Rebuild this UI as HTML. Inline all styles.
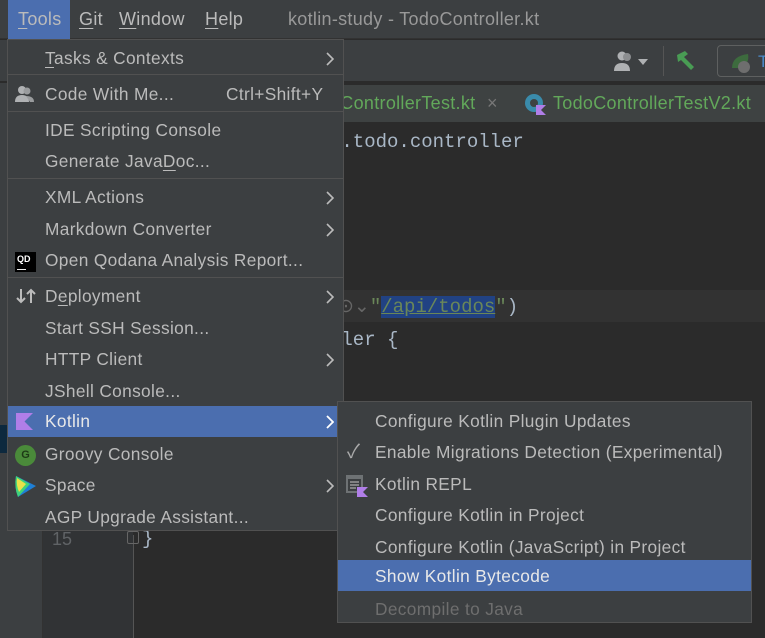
<!DOCTYPE html>
<html><head><meta charset="utf-8"><style>
*{margin:0;padding:0;box-sizing:border-box}
body{width:765px;height:638px;overflow:hidden;background:#2b2b2b;position:relative;font-family:"Liberation Sans","Noto Sans CJK KR",sans-serif;color:#bbbbbb}
.a{position:absolute}
.mb{font-size:18px;color:#bbb;letter-spacing:0.3px}
.u{text-decoration:underline;text-underline-offset:3px}
.menu{position:absolute;background:#3c3f41;border:1px solid #515151}
.it{position:absolute;left:0;right:0;height:31px;font-size:17.3px;letter-spacing:0.35px;line-height:31px;padding-left:37px;white-space:nowrap}
.sel{background:#4b6eaf;color:#e8e8e8}
.arr{position:absolute;right:9px;top:9px;width:8px;height:14px}
.sep{position:absolute;left:0;right:0;height:1px;background:#515151}
.code{font-family:"Liberation Mono",monospace;font-size:19px;color:#a9b7c6}
</style></head><body>
<div class="a" style="left:0;top:0;width:765px;height:39px;background:#3c3f41;border-bottom:1px solid #323232"></div>
<div class="a" style="left:8px;top:0;width:62px;height:39px;background:#4b6eaf"></div>
<div class="a mb" style="left:18px;top:9px"><span class="u">T</span>ools</div>
<div class="a mb" style="left:79px;top:9px"><span class="u">G</span>it</div>
<div class="a mb" style="left:119px;top:9px"><span class="u">W</span>indow</div>
<div class="a mb" style="left:205px;top:9px"><span class="u">H</span>elp</div>
<div class="a mb" style="left:288px;top:9px;color:#999">kotlin-study - TodoController.kt</div>
<div class="a" style="left:0;top:40px;width:765px;height:43px;background:#3c3f41;border-bottom:2px solid #2b2b2b"></div>
<svg class="a" style="left:612px;top:50px" width="40" height="24"><circle cx="10" cy="6" r="4.5" fill="#afb1b3"/><path d="M2 21 q0-8 8-8 q8 0 8 8z" fill="#afb1b3"/><circle cx="15" cy="7" r="4" fill="#8c8e90"/><path d="M26 9h10l-5 6z" fill="#afb1b3"/></svg>
<div class="a" style="left:663px;top:46px;width:1px;height:30px;background:#555"></div>
<svg class="a" style="left:674px;top:50px" width="26" height="24"><path d="M3 5 l8-4 l3 3 l-4 3 l10 10 l-3 3 l-10 -10 l-3 2z" fill="#499c54"/></svg>
<div class="a" style="left:717px;top:45px;width:60px;height:32px;border:1px solid #5e6060;border-radius:4px"></div>
<svg class="a" style="left:728px;top:52px" width="30" height="22"><path d="M4 16 q0-12 16-14 q2 10-8 14z" fill="#3d6b3e"/><circle cx="16" cy="15" r="6" fill="#6e6e6e"/></svg>
<div class="a" style="left:758px;top:52px;font-size:17px;color:#4a88c7">T</div>
<div class="a" style="left:43px;top:85px;width:722px;height:37px;background:#3e4242"></div>
<div class="a" style="left:330px;top:93px;font-size:18px;color:#62a85a;letter-spacing:0.3px">oControllerTest.kt</div>
<div class="a" style="left:487px;top:93px;font-size:18px;color:#777">×</div>
<svg class="a" style="left:524px;top:92px" width="24" height="24"><circle cx="10" cy="11" r="9" fill="#3a8bab"/><circle cx="10" cy="11" r="4" fill="#3e4242"/><path d="M12 13h10l-5 5 5 5h-10z" fill="#b07ee8"/></svg>
<div class="a" style="left:553px;top:93px;font-size:18px;color:#62a85a;letter-spacing:0.3px">TodoControllerTestV2.kt</div>
<div class="a" style="left:0;top:83px;width:43px;height:555px;background:#3c3f41;border-right:1px solid #323232"></div>
<div class="a" style="left:0;top:425px;width:8px;height:28px;background:#0d293e"></div>
<div class="a" style="left:43px;top:122px;width:90px;height:516px;background:#313335"></div>
<div class="a" style="left:133px;top:535px;width:1px;height:103px;background:#555"></div>
<div class="a" style="left:127px;top:531px;width:12px;height:13px;border:1px solid #666;border-radius:2px"></div>
<div class="a" style="left:52px;top:529px;font-size:18px;color:#606366">15</div>
<div class="a code" style="left:142px;top:528px">}</div>
<div class="a code" style="left:330px;top:131px">r.todo.controller</div>
<div class="a" style="left:134px;top:290px;width:631px;height:32px;background:#323232"></div>
<div class="a code" style="left:338px;top:295px"><span style="color:#666">⊙⌄</span><span style="color:#6a8759">"</span><span style="background:#214283;color:#6a8759;text-decoration:underline">/api/todos</span><span style="color:#6a8759">"</span>)</div>
<div class="a code" style="left:330px;top:329px">ller {</div>
<div class="menu" style="left:7px;top:39px;width:337px;height:492px">
<div class="it" style="top:3px"><span class="u">T</span>asks &amp; Contexts<svg class="arr"><path d="M1 1l6 6-6 6" stroke="#bbb" stroke-width="1.6" fill="none"/></svg></div>
<div class="sep" style="top:34px"></div>
<div class="it" style="top:39px">Code With Me...<span class="a" style="left:218px">Ctrl+Shift+Y</span>
<svg class="a" style="left:6px;top:6px" width="22" height="18"><circle cx="8" cy="5" r="4" fill="#afb1b3"/><path d="M1 17q0-7 7-7q7 0 7 7z" fill="#afb1b3"/><circle cx="13" cy="6" r="3.5" fill="#9a9c9e"/><path d="M12 11q8 0 8 6h-4z" fill="#9a9c9e"/></svg></div>
<div class="sep" style="top:71px"></div>
<div class="it" style="top:75px">IDE Scripting Console</div>
<div class="it" style="top:106px">Generate Java<span class="u">D</span>oc...</div>
<div class="sep" style="top:138px"></div>
<div class="it" style="top:142px">XML Actions<svg class="arr"><path d="M1 1l6 6-6 6" stroke="#bbb" stroke-width="1.6" fill="none"/></svg></div>
<div class="it" style="top:174px">Markdown Converter<svg class="arr"><path d="M1 1l6 6-6 6" stroke="#bbb" stroke-width="1.6" fill="none"/></svg></div>
<div class="it" style="top:205px">Open Qodana Analysis Report...
<div class="a" style="left:7px;top:7px;width:21px;height:20px;background:#000;color:#fff;font-size:9px;line-height:10px;font-weight:bold;padding:2px;letter-spacing:0">QD<br>—</div></div>
<div class="sep" style="top:237px"></div>
<div class="it" style="top:241px">D<span class="u">e</span>ployment<svg class="arr"><path d="M1 1l6 6-6 6" stroke="#bbb" stroke-width="1.6" fill="none"/></svg>
<svg class="a" style="left:8px;top:6px" width="22" height="18"><path d="M5 2v13M1 11l4 4 4-4M15 16V3M11 7l4-4 4 4" stroke="#bbb" stroke-width="2" fill="none"/></svg></div>
<div class="it" style="top:273px">Start SSH Session...</div>
<div class="it" style="top:304px">HTTP Client<svg class="arr"><path d="M1 1l6 6-6 6" stroke="#bbb" stroke-width="1.6" fill="none"/></svg></div>
<div class="it" style="top:336px">JShell Console...</div>
<div class="it sel" style="top:366px">Kotlin<svg class="arr"><path d="M1 1l6 6-6 6" stroke="#fff" stroke-width="1.8" fill="none"/></svg>
<svg class="a" style="left:8px;top:7px" width="18" height="17"><path d="M0 0h17l-8.5 8.5l8.5 8.5h-17z" fill="#b07ee8"/></svg></div>
<div class="it" style="top:399px">Groovy Console
<div class="a" style="left:7px;top:6px;width:21px;height:21px;border-radius:50%;background:#4a8a3a;color:#1d3a16;font-size:11px;line-height:21px;text-align:center;font-weight:bold;letter-spacing:0">G</div></div>
<div class="it" style="top:430px">Space<svg class="arr"><path d="M1 1l6 6-6 6" stroke="#bbb" stroke-width="1.6" fill="none"/></svg>
<svg class="a" style="left:6px;top:5px" width="24" height="23"><path d="M2 1 L22 11 L4 22 Q0 12 2 1z" fill="#1e7fd6"/><path d="M2 1 L16 9 L4 22 Q0 12 2 1z" fill="#3fd27a"/><path d="M3 3 L12 9 L5 17 Q2 10 3 3z" fill="#e8e24a"/></svg></div>
<div class="it" style="top:462px">AGP Upgrade Assistant...</div>
</div>
<div class="menu" style="left:337px;top:401px;width:415px;height:222px">
<div class="it" style="top:4px">Configure Kotlin Plugin Updates</div>
<div class="it" style="top:35px">Enable Migrations Detection (Experimental)<span class="a" style="left:9px;font-size:19px;color:#aaa">✓</span></div>
<div class="it" style="top:67px">Kotlin REPL
<svg class="a" style="left:7px;top:4px" width="24" height="24"><rect x="1" y="2" width="17" height="18" fill="#6e7274"/><rect x="3" y="6" width="13" height="12" fill="#3c3f41"/><path d="M5 9h9M5 12h9M5 15h6" stroke="#999" stroke-width="1.5"/><path d="M12 14h11l-5 5 5 5h-11z" fill="#b07ee8"/></svg></div>
<div class="it" style="top:98px">Configure Kotlin in Project</div>
<div class="it" style="top:130px">Configure Kotlin (JavaScript) in Project</div>
<div class="it sel" style="top:158px;line-height:33px">Show Kotlin Bytecode</div>
<div class="it" style="top:192px;color:#6e6e6e">Decompile to Java</div>
</div>
</body></html>
